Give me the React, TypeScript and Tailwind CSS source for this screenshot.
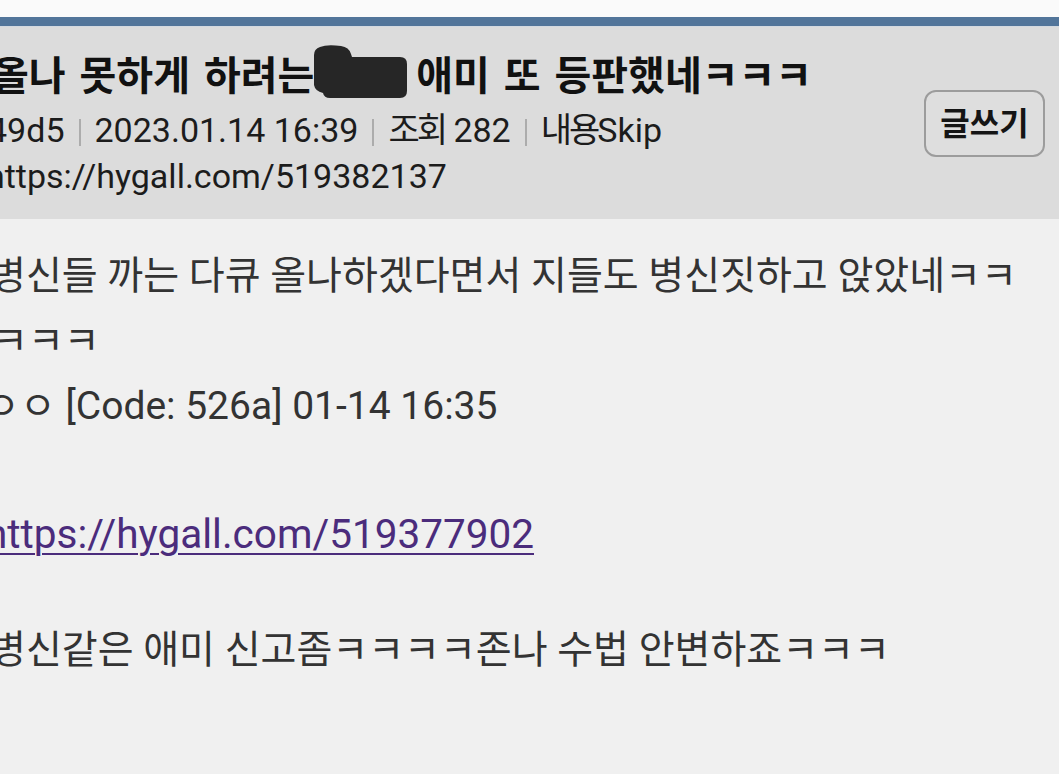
function Sep() {
  return <span className="inline-block w-[2px] h-[27px] bg-[#acacac] mx-[14px] align-[-4px]" />;
}

// black scribble covering part of the title
function Blob() {
  return (
    <span className="relative inline-block w-[88px] h-0">
      <svg viewBox="0 0 93 54" className="absolute left-0 bottom-[-9px] w-[93px] h-[54px]">
        <path
          d="M6 2 Q13 -1 27 1 Q35 2 37 9 L38 12 L86 12 Q93 12 93 19 L93 46 Q93 53 86 53 L16 53 Q10 53 9 48 Q1 46 0 40 L0 10 Q0 4 6 2 Z"
          fill="#262626"
        />
      </svg>
    </span>
  );
}

export default function App() {
  return (
    <div className="w-[1059px] h-[774px] overflow-hidden bg-[#f0f0f0] font-[Roboto,'Noto_Sans_CJK_KR',sans-serif]">
      <div className="h-[17px] bg-[#fafafa]" />
      <div className="h-[9px] bg-[#52759a]" />
      <div className="h-px bg-[#d3d9e0]" />

      {/* header */}
      <div className="h-[192px] bg-[#dcdcdc] flex">
        <div className="flex-1 min-w-0 whitespace-nowrap pt-[26px]">
          <div className="ml-[-8px] text-[40px] leading-[48px] font-bold text-[#111] [word-spacing:4px]">
            올나 못하게 하려는<Blob /> 애미 또 등판했네ㅋㅋㅋ
          </div>
          <div className="mt-[6px] ml-[-12px] text-[34px] leading-[46px] text-[#1c1c1c]">
            49d5<Sep />2023.01.14 16:39<Sep />
            <span className="tracking-[-3px]">조회</span> 282<Sep />
            <span className="tracking-[-3px]">내용</span>Skip
          </div>
          <div className="ml-[-14px] text-[34px] leading-[46px] text-[#1c1c1c]">https://hygall.com/519382137</div>
        </div>
        <div className="mt-[63px] mr-[14px] w-[121px] h-[67px] rounded-[12px] border-2 border-[#9c9c9c] bg-[#dedede] flex items-center justify-center">
          <span className="text-[32px] font-bold text-[#151515]">글쓰기</span>
        </div>
      </div>

      {/* body */}
      <div className="pt-[25px] whitespace-nowrap text-[39px] leading-[65px] text-[#333]">
        <div className="ml-[-10px]">병신들 까는 다큐 올나하겠다면서 지들도 병신짓하고 앉았네ㅋㅋ</div>
        <div className="ml-[-8px]">ㅋㅋㅋ</div>
        <div className="ml-[-16px]">ㅇㅇ [Code: 526a] 01-14 16:35</div>
        <div className="mt-[63px] ml-[-15px]">
          <a href="#" className="text-[40.5px] text-[#4b2c7c] underline decoration-[2px] underline-offset-[5px]">
            https://hygall.com/519377902
          </a>
        </div>
        <div className="mt-[50px] ml-[-10px]">병신같은 애미 신고좀ㅋㅋㅋㅋ존나 수법 안변하죠ㅋㅋㅋ</div>
      </div>
    </div>
  );
}
